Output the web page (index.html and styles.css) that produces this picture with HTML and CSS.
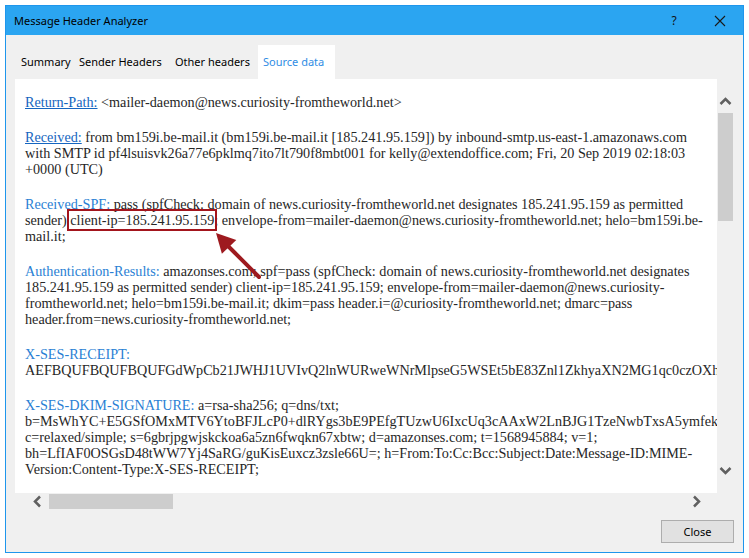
FILE: index.html
```html
<!DOCTYPE html>
<html lang="en">
<head>
<meta charset="utf-8">
<title>Message Header Analyzer</title>
<link rel="stylesheet" href="styles.css">
</head>
<body>
<div class="window">
  <div class="titlebar">
    <span class="title">Message Header Analyzer</span>
    <div class="tb-buttons">
      <span class="tb-btn help">?</span>
      <span class="tb-btn">
        <svg width="12" height="12" viewBox="0 0 12 12"><path d="M1 1 L11 11 M11 1 L1 11" stroke="#1a1a1a" stroke-width="1.1" fill="none"/></svg>
      </span>
    </div>
  </div>
  <div class="client">
    <div class="tabs">
      <div class="tab t1">Summary</div>
      <div class="tab t2">Sender Headers</div>
      <div class="tab t3">Other headers</div>
      <div class="tab t4 active">Source data</div>
    </div>
    <div class="viewer">
      <div class="content">
        <p class="hdr"><span class="key visited">Return-Path:</span> &lt;mailer-daemon@news.curiosity-fromtheworld.net&gt;</p>
        <p class="hdr"><span class="key visited">Received:</span> from bm159i.be-mail.it (bm159i.be-mail.it [185.241.95.159]) by inbound-smtp.us-east-1.amazonaws.com with SMTP id pf4lsuisvk26a77e6pklmq7ito7lt790f8mbt001 for kelly@extendoffice.com; Fri, 20 Sep 2019 02:18:03 +0000 (UTC)</p>
        <p class="hdr"><span class="key">Received-SPF:</span> pass (spfCheck: domain of news.curiosity-fromtheworld.net designates 185.241.95.159 as permitted sender) <span class="boxed">client-ip=185.241.95.159</span>; envelope-from=mailer-daemon@news.curiosity-fromtheworld.net; helo=bm159i.be-mail.it;</p>
        <p class="hdr"><span class="key">Authentication-Results:</span> amazonses.com; spf=pass (spfCheck: domain of news.curiosity-fromtheworld.net designates 185.241.95.159 as permitted sender) client-ip=185.241.95.159; envelope-from=mailer-daemon@news.curiosity-fromtheworld.net; helo=bm159i.be-mail.it; dkim=pass header.i=@curiosity-fromtheworld.net; dmarc=pass header.from=news.curiosity-fromtheworld.net;</p>
        <p class="hdr"><span class="key">X-SES-RECEIPT:</span> AEFBQUFBQUFBQUFGdWpCb21JWHJ1UVIvQ2lnWURweWNrMlpseG5WSEt5bE83Znl1ZkhyaXN2MG1qc0czOXh5Um5zQ0RmWmpYVjJQdXhBd1ZLeXRCbTRqbWlVR0xkZz0=</p>
        <p class="hdr"><span class="key">X-SES-DKIM-SIGNATURE:</span> a=rsa-sha256; q=dns/txt; b=MsWhYC+E5GSfOMxMTV6YtoBFJLcP0+dlRYgs3bE9PEfgTUzwU6IxcUq3cAAxW2LnBJG1TzeNwbTxsA5ymfekKnQ7cX8yZk1rP2dLsT4vWq9hN0uJ3mRcE6aB8xYz=; c=relaxed/simple; s=6gbrjpgwjskckoa6a5zn6fwqkn67xbtw; d=amazonses.com; t=1568945884; v=1; bh=LfIAF0OSGsD48tWW7Yj4SaRG/guKisEuxcz3zsle66U=; h=From:To:Cc:Bcc:Subject:Date:Message-ID:MIME-Version:Content-Type:X-SES-RECEIPT;</p>
        <svg class="callout" width="50" height="52" viewBox="0 0 50 52">
          <line x1="12" y1="16" x2="44" y2="48" stroke="#9e1a1f" stroke-width="4" stroke-linecap="round"/>
          <polygon points="1,4 21.3,10.9 6.9,24.7" fill="#9e1a1f"/>
        </svg>
      </div>
      <div class="vscroll">
        <svg class="arrow" width="17" height="17" viewBox="0 0 17 17"><polyline points="3.5,11 8.5,6 13.5,11" fill="none" stroke="#606060" stroke-width="2.5"/></svg>
        <div class="vthumb"></div>
        <div class="spacer"></div>
        <svg class="arrow" width="17" height="17" viewBox="0 0 17 17"><polyline points="3.5,6 8.5,11 13.5,6" fill="none" stroke="#606060" stroke-width="2.5"/></svg>
      </div>
      <div class="hscroll">
        <svg class="arrow" width="17" height="17" viewBox="0 0 17 17"><polyline points="11,3.5 6,8.5 11,13.5" fill="none" stroke="#606060" stroke-width="2.5"/></svg>
        <div class="hthumb"></div>
        <div class="spacer"></div>
        <svg class="arrow" width="17" height="17" viewBox="0 0 17 17"><polyline points="6,3.5 11,8.5 6,13.5" fill="none" stroke="#606060" stroke-width="2.5"/></svg>
      </div>
      <div class="corner"></div>
    </div>
    <div class="footer">
      <button class="btn">Close</button>
    </div>
  </div>
</div>
</body>
</html>
```
FILE: styles.css
```css
html, body {
  margin: 0;
  background: #ffffff;
}
body {
  box-sizing: border-box;
  width: 749px;
  height: 558px;
  padding: 5px;
  font-family: "Noto Sans", "Open Sans", sans-serif;
  font-size: 11px;
  color: #000;
}
.window {
  box-sizing: border-box;
  height: 548px;
  border: 1px solid #1e96ec;
  background: #f0f0f0;
  display: flex;
  flex-direction: column;
}
.titlebar {
  height: 29px;
  background: #2ba5f1;
  display: flex;
  align-items: center;
  padding-left: 8px;
}
.title {
  flex: 1;
  color: #000;
  font-size: 11px;
}
.tb-buttons {
  display: flex;
}
.tb-btn {
  width: 46px;
  height: 29px;
  display: flex;
  align-items: center;
  justify-content: center;
}
.help {
  font-size: 12px;
  color: #111;
}
.client {
  flex: 1;
  display: flex;
  flex-direction: column;
  padding: 10px 9px 9px 9px;
}
.tabs {
  display: flex;
  height: 34px;
  padding-left: 3px;
}
.tab {
  box-sizing: border-box;
  display: flex;
  align-items: center;
  padding-left: 3px;
  white-space: nowrap;
  padding-bottom: 1px;
  font-size: 11px;
}
.t1 { width: 58px; }
.t2 { width: 96px; }
.t3 { width: 86px; }
.t4 { width: 77px; }
.tab.active {
  background: #fff;
  color: #2f8de4;
  padding-left: 5px;
}
.viewer {
  display: grid;
  grid-template-columns: 702px 17px;
  grid-template-rows: 414px 17px;
}
.content {
  position: relative;
  background: #fff;
  overflow: hidden;
  padding: 15px 10px 0 10px;
  font-family: "Liberation Serif", "Times New Roman", serif;
  font-size: 14.2px;
  line-height: 16px;
  color: #262626;
}
.hdr {
  margin: 0 0 19px 0;
}
.key {
  color: #2a7fd4;
}
.key.visited {
  color: #1565c0;
  text-decoration: underline;
}
.boxed {
  outline: 2px solid #a3151d;
  outline-offset: 1px;
}
.callout {
  position: absolute;
  left: 200px;
  top: 150px;
}
.vscroll {
  display: flex;
  flex-direction: column;
  align-items: center;
  padding: 14px 0;
}
.hscroll {
  display: flex;
  align-items: center;
  padding: 0 12px 0 14px;
}
.arrow {
  flex: none;
  display: block;
}
.vthumb {
  width: 15px;
  height: 108px;
  margin-top: 3px;
  background: #cdcdcd;
}
.hthumb {
  width: 124px;
  height: 15px;
  margin-left: 3px;
  background: #cdcdcd;
}
.spacer {
  flex: 1;
}
.corner {
  background: #f0f0f0;
}
.footer {
  display: flex;
  justify-content: flex-end;
  margin-top: 10px;
}
.btn {
  box-sizing: border-box;
  width: 73px;
  height: 23px;
  border: 1px solid #adadad;
  background: #e1e1e1;
  font-family: "Noto Sans", "Open Sans", sans-serif;
  font-size: 11px;
  color: #000;
  padding: 0;
  margin: 0;
}
```
